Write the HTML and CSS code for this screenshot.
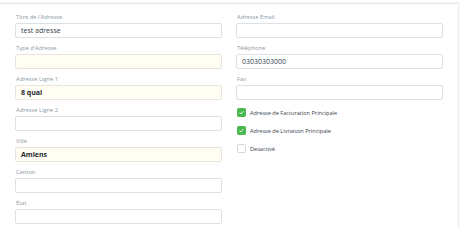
FILE: index.html
```html
<!DOCTYPE html>
<html lang="fr">
<head>
<meta charset="utf-8">
<link rel="stylesheet" href="styles.css">
</head>
<body>
<div class="page">
  <div class="form">
    <div class="col">
      <div class="field"><div class="label">Titre de l'Adresse</div><div class="input">test adresse</div></div>
      <div class="field"><div class="label">Type d'Adresse</div><div class="input req"></div></div>
      <div class="field"><div class="label">Adresse Ligne 1</div><div class="input req bold">8 quai</div></div>
      <div class="field"><div class="label">Adresse Ligne 2</div><div class="input"></div></div>
      <div class="field"><div class="label">Ville</div><div class="input req bold">Amiens</div></div>
      <div class="field"><div class="label">Canton</div><div class="input"></div></div>
      <div class="field"><div class="label">État</div><div class="input"></div></div>
    </div>
    <div class="col">
      <div class="field"><div class="label">Adresse Email</div><div class="input"></div></div>
      <div class="field"><div class="label">Téléphone</div><div class="input">03030303000</div></div>
      <div class="field"><div class="label">Fax</div><div class="input"></div></div>
      <div class="checks">
        <div class="check"><span class="box on"><svg viewBox="0 0 10 10"><path d="M2.3 5.2 L4.2 7 L7.8 3.2" fill="none" stroke="#fff" stroke-width="1.3"/></svg></span><span class="clabel">Adresse de Facturation Principale</span></div>
        <div class="check"><span class="box on"><svg viewBox="0 0 10 10"><path d="M2.3 5.2 L4.2 7 L7.8 3.2" fill="none" stroke="#fff" stroke-width="1.3"/></svg></span><span class="clabel">Adresse de Livraison Principale</span></div>
        <div class="check"><span class="box"></span><span class="clabel">Desactivé</span></div>
      </div>
    </div>
  </div>
</div>
</body>
</html>
```

FILE: styles.css
```css
html, body {
  margin: 0;
  padding: 0;
  background: #fff;
}
body {
  font-family: "Open Sans", "Noto Sans", sans-serif;
  color: #36414c;
}
.page {
  margin-top: 3px;
  width: 459px;
  height: 224px;
  box-sizing: border-box;
  border-top: 1px solid #e4e7ea;
  border-right: 1px solid #eaedf0;
  box-shadow: 0 -1px 2px rgba(0,0,0,0.04);
}
.form {
  display: grid;
  grid-template-columns: 207px 207px;
  column-gap: 14px;
  padding: 9px 0 0 15px;
}
.field {
  display: flex;
  flex-direction: column;
  margin-bottom: 6px;
}
.label {
  font-size: 5.75px;
  line-height: 8px;
  height: 8px;
  color: #8d99a6;
  padding-left: 1px;
  margin-bottom: 2px;
}
.input {
  height: 15px;
  box-sizing: border-box;
  border: 1px solid #dce1e5;
  border-radius: 2px;
  font-size: 7px;
  line-height: 13px;
  padding-left: 5px;
  color: #36414c;
  background: #fff;
}
.input.req {
  background: #fffdf4;
  border-color: #e8e6da;
}
.input.bold {
  font-weight: 700;
  color: #1f272e;
}
.checks {
  display: flex;
  flex-direction: column;
  gap: 9px;
  padding-top: 2px;
  padding-left: 1px;
}
.check {
  display: flex;
  align-items: center;
  height: 9px;
}
.box {
  width: 9px;
  height: 9px;
  box-sizing: border-box;
  border: 1px solid #d1d8dd;
  border-radius: 1.5px;
  margin-right: 4px;
  display: flex;
  background: #fff;
}
.box.on {
  background: #4cb850;
  border-color: #4cb850;
}
.box svg {
  width: 100%;
  height: 100%;
}
.clabel {
  font-size: 5.6px;
  line-height: 8px;
  color: #36414c;
}
```
